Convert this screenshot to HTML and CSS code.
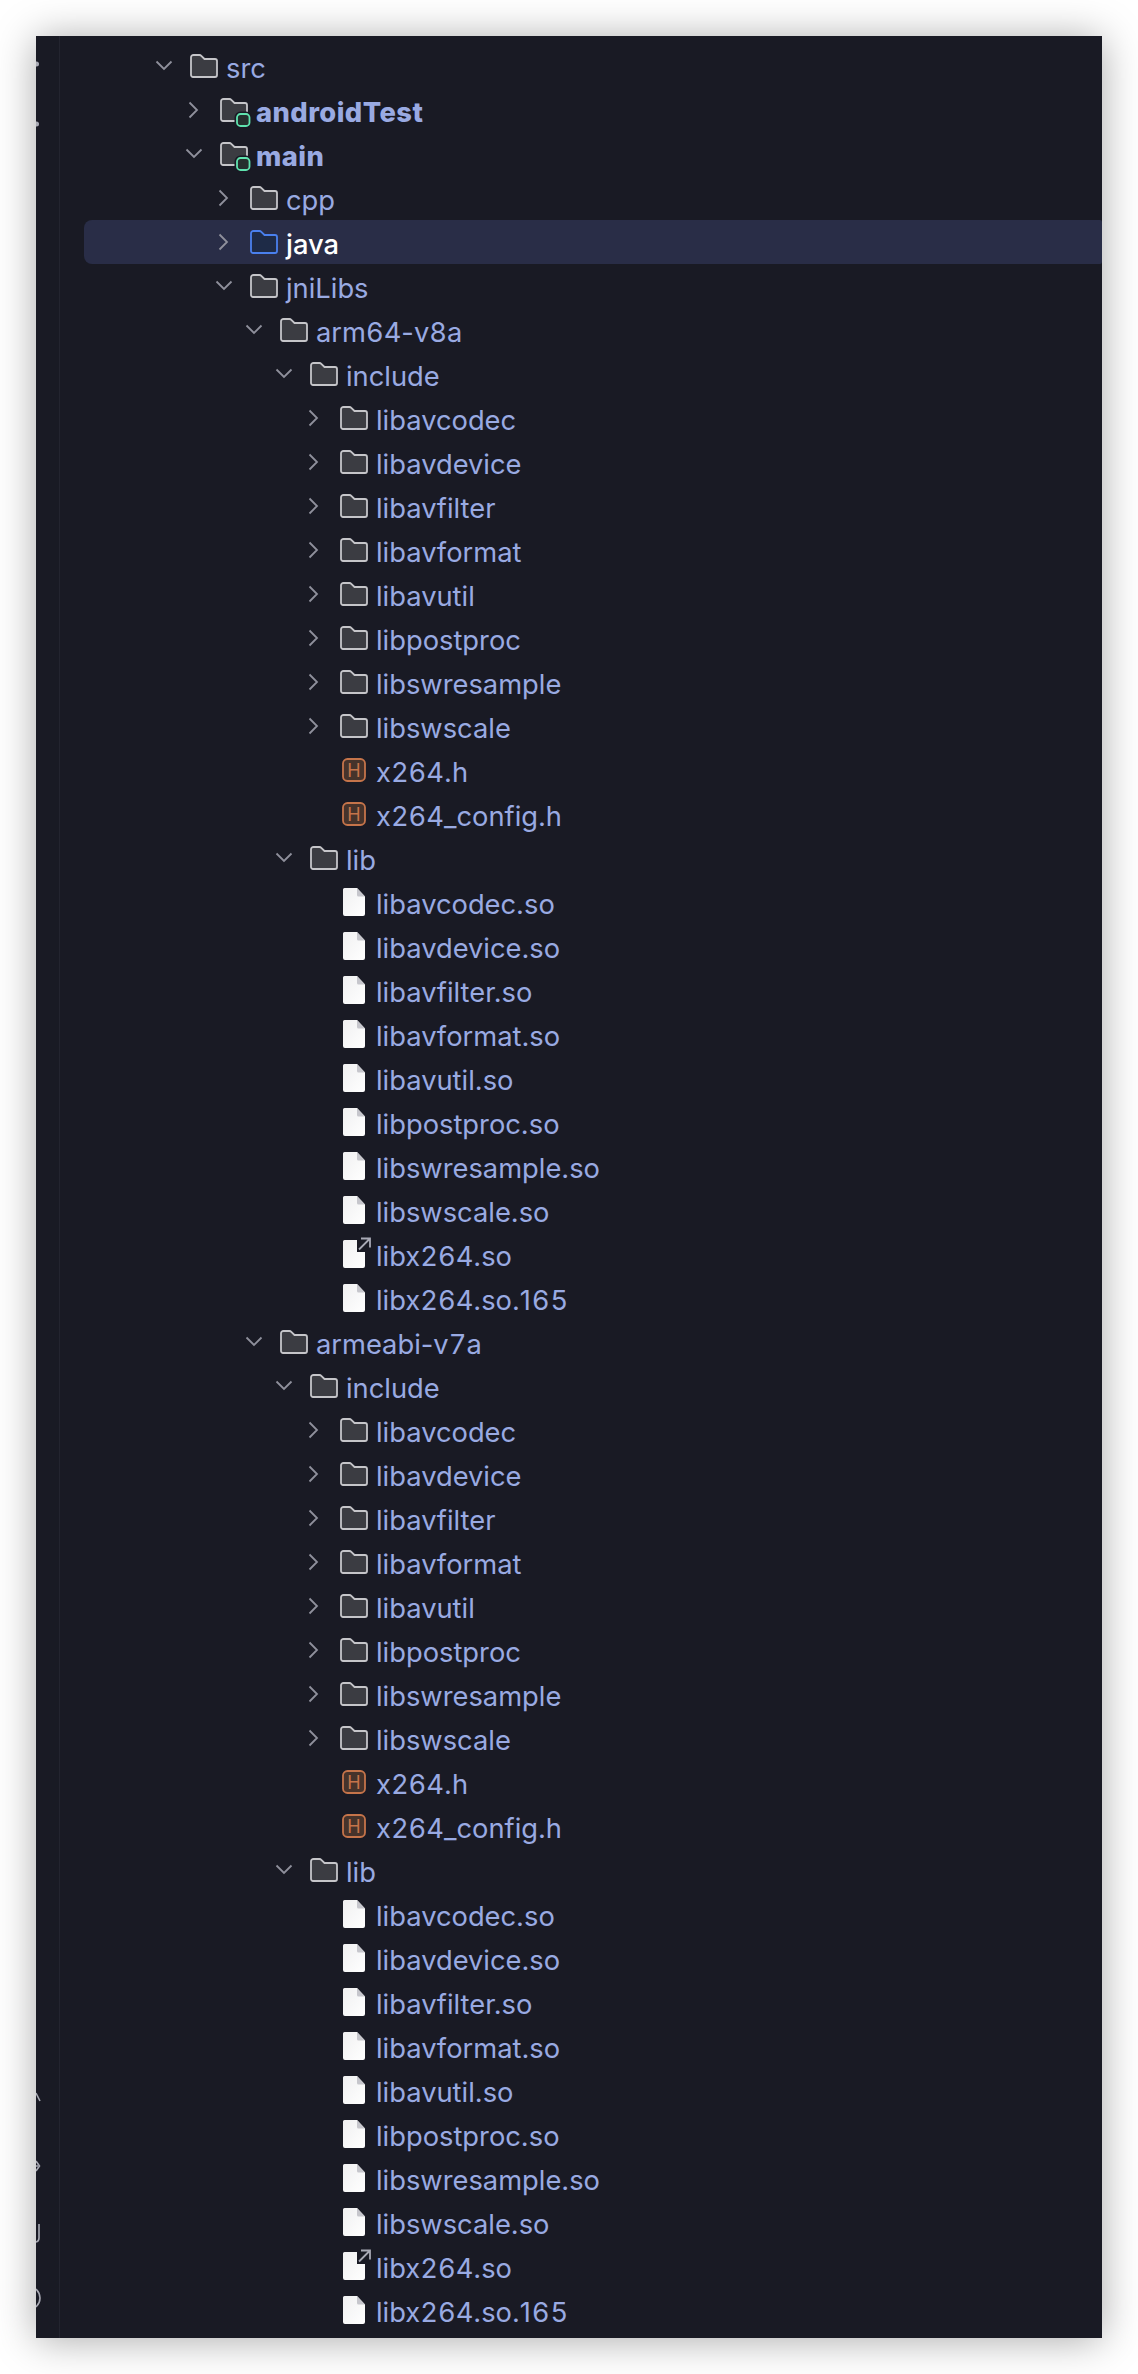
FILE: index.html
```html
<!DOCTYPE html>
<html lang="en">
<head>
<meta charset="utf-8">
<title>Project tree</title>
<link rel="stylesheet" href="styles.css">
</head>
<body>
<svg class="defs" width="0" height="0" aria-hidden="true">
  <symbol id="down" viewBox="0 0 16 16"><path d="M0.5 3.5L8 11L15.5 3.5"/></symbol>
  <symbol id="right" viewBox="0 0 16 16"><path d="M3.5 0.5L11 8L3.5 15.5"/></symbol>
  <symbol id="folder" viewBox="0 0 28 24"><path d="M3.5 1H9.5Q10.5 1 11.3 1.8L14.5 5H25a2 2 0 0 1 2 2V21a2 2 0 0 1-2 2H3a2 2 0 0 1-2-2V3.5A2.5 2.5 0 0 1 3.5 1Z"/></symbol>
  <symbol id="module" viewBox="0 0 28 24">
    <path class="m-folder" d="M3.5 1H9.5Q10.5 1 11.3 1.8L14.5 5H25a2 2 0 0 1 2 2V21a2 2 0 0 1-2 2H3a2 2 0 0 1-2-2V3.5A2.5 2.5 0 0 1 3.5 1Z"/>
    <rect class="m-halo" x="17" y="16" width="12.5" height="12" rx="3.5"/>
    <rect class="m-badge" x="17" y="16" width="12.5" height="12" rx="3.5"/>
  </symbol>
  <symbol id="file" viewBox="0 0 22 28">
    <path class="f-body" d="M1.5 0H14L22 8.5V26a2 2 0 0 1-2 2H2a2 2 0 0 1-2-2V1.500A1.500 1.500 0 0 1 1.500 0Z"/>
    <path class="f-fold" d="M14 0L22 8.500H15.500A1.500 1.500 0 0 1 14 7Z"/>
  </symbol>
  <symbol id="link" viewBox="0 0 22 28">
    <path class="f-body" d="M1.500 0H14V12H22V26a2 2 0 0 1-2 2H2a2 2 0 0 1-2-2V1.500A1.500 1.500 0 0 1 1.500 0Z"/>
    <path class="f-arrow" d="M16 9.500L27 -1.500M18 -1.500H27V7.500"/>
  </symbol>
  <symbol id="header" viewBox="0 0 24 24">
    <rect class="h-box" x="1" y="1" width="22" height="22" rx="4.500"/>
    <text class="h-letter" x="12" y="18.500">H</text>
  </symbol>
  <linearGradient id="paper" x1="0" y1="0" x2="1" y2="1"><stop offset="0" stop-color="#f0f0f1"/><stop offset="1" stop-color="#ffffff"/></linearGradient>
</svg>

<main class="window">
  <aside class="rail">
    <div class="rail-group">
      <svg class="frag frag-dot1" viewBox="0 0 4 6"><circle cx="0" cy="3" r="2.500"/></svg>
      <svg class="frag frag-dot2" viewBox="0 0 4 6"><circle cx="0" cy="3" r="2.500"/></svg>
    </div>
    <div class="rail-group rail-bottom">
      <svg class="frag frag-tri" viewBox="0 0 5 10"><path d="M0 1L4 9"/></svg>
      <svg class="frag frag-dia" viewBox="0 0 5 12"><path d="M0 1L3.500 6L0 11M0 6H2"/></svg>
      <svg class="frag frag-cup" viewBox="0 0 5 20"><path d="M3 1V15Q3 18.500 0 19"/></svg>
      <svg class="frag frag-arc" viewBox="0 0 5 20"><path d="M0 1Q4 5 4 10T0 19"/></svg>
    </div>
  </aside>
  <div class="tree">
    <div class="row d0"><svg class="chev"><use href="#down"/></svg><svg class="ico folder"><use href="#folder"/></svg><span>src</span></div>
    <div class="row d1 strong"><svg class="chev"><use href="#right"/></svg><svg class="ico module"><use href="#module"/></svg><span>androidTest</span></div>
    <div class="row d1 strong"><svg class="chev"><use href="#down"/></svg><svg class="ico module"><use href="#module"/></svg><span>main</span></div>
    <div class="row d2"><svg class="chev"><use href="#right"/></svg><svg class="ico folder"><use href="#folder"/></svg><span>cpp</span></div>
    <div class="row d2 selected"><svg class="chev"><use href="#right"/></svg><svg class="ico folder blue"><use href="#folder"/></svg><span>java</span></div>
    <div class="row d2"><svg class="chev"><use href="#down"/></svg><svg class="ico folder"><use href="#folder"/></svg><span>jniLibs</span></div>

    <div class="row d3"><svg class="chev"><use href="#down"/></svg><svg class="ico folder"><use href="#folder"/></svg><span>arm<b>64</b>-v<b>8</b>a</span></div>
    <div class="row d4"><svg class="chev"><use href="#down"/></svg><svg class="ico folder"><use href="#folder"/></svg><span>include</span></div>
    <div class="row d5"><svg class="chev"><use href="#right"/></svg><svg class="ico folder"><use href="#folder"/></svg><span>libavcodec</span></div>
    <div class="row d5"><svg class="chev"><use href="#right"/></svg><svg class="ico folder"><use href="#folder"/></svg><span>libavdevice</span></div>
    <div class="row d5"><svg class="chev"><use href="#right"/></svg><svg class="ico folder"><use href="#folder"/></svg><span>libavfilter</span></div>
    <div class="row d5"><svg class="chev"><use href="#right"/></svg><svg class="ico folder"><use href="#folder"/></svg><span>libavformat</span></div>
    <div class="row d5"><svg class="chev"><use href="#right"/></svg><svg class="ico folder"><use href="#folder"/></svg><span>libavutil</span></div>
    <div class="row d5"><svg class="chev"><use href="#right"/></svg><svg class="ico folder"><use href="#folder"/></svg><span>libpostproc</span></div>
    <div class="row d5"><svg class="chev"><use href="#right"/></svg><svg class="ico folder"><use href="#folder"/></svg><span>libswresample</span></div>
    <div class="row d5"><svg class="chev"><use href="#right"/></svg><svg class="ico folder"><use href="#folder"/></svg><span>libswscale</span></div>
    <div class="row d5 leaf"><svg class="ico header"><use href="#header"/></svg><span>x<b>264</b>.h</span></div>
    <div class="row d5 leaf"><svg class="ico header"><use href="#header"/></svg><span>x<b>264</b>_config.h</span></div>
    <div class="row d4"><svg class="chev"><use href="#down"/></svg><svg class="ico folder"><use href="#folder"/></svg><span>lib</span></div>
    <div class="row d5 leaf"><svg class="ico file"><use href="#file"/></svg><span>libavcodec.so</span></div>
    <div class="row d5 leaf"><svg class="ico file"><use href="#file"/></svg><span>libavdevice.so</span></div>
    <div class="row d5 leaf"><svg class="ico file"><use href="#file"/></svg><span>libavfilter.so</span></div>
    <div class="row d5 leaf"><svg class="ico file"><use href="#file"/></svg><span>libavformat.so</span></div>
    <div class="row d5 leaf"><svg class="ico file"><use href="#file"/></svg><span>libavutil.so</span></div>
    <div class="row d5 leaf"><svg class="ico file"><use href="#file"/></svg><span>libpostproc.so</span></div>
    <div class="row d5 leaf"><svg class="ico file"><use href="#file"/></svg><span>libswresample.so</span></div>
    <div class="row d5 leaf"><svg class="ico file"><use href="#file"/></svg><span>libswscale.so</span></div>
    <div class="row d5 leaf"><svg class="ico file"><use href="#link"/></svg><span>libx<b>264</b>.so</span></div>
    <div class="row d5 leaf"><svg class="ico file"><use href="#file"/></svg><span>libx<b>264</b>.so.<i>165</i></span></div>

    <div class="row d3"><svg class="chev"><use href="#down"/></svg><svg class="ico folder"><use href="#folder"/></svg><span>armeabi-v<b>7</b>a</span></div>
    <div class="row d4"><svg class="chev"><use href="#down"/></svg><svg class="ico folder"><use href="#folder"/></svg><span>include</span></div>
    <div class="row d5"><svg class="chev"><use href="#right"/></svg><svg class="ico folder"><use href="#folder"/></svg><span>libavcodec</span></div>
    <div class="row d5"><svg class="chev"><use href="#right"/></svg><svg class="ico folder"><use href="#folder"/></svg><span>libavdevice</span></div>
    <div class="row d5"><svg class="chev"><use href="#right"/></svg><svg class="ico folder"><use href="#folder"/></svg><span>libavfilter</span></div>
    <div class="row d5"><svg class="chev"><use href="#right"/></svg><svg class="ico folder"><use href="#folder"/></svg><span>libavformat</span></div>
    <div class="row d5"><svg class="chev"><use href="#right"/></svg><svg class="ico folder"><use href="#folder"/></svg><span>libavutil</span></div>
    <div class="row d5"><svg class="chev"><use href="#right"/></svg><svg class="ico folder"><use href="#folder"/></svg><span>libpostproc</span></div>
    <div class="row d5"><svg class="chev"><use href="#right"/></svg><svg class="ico folder"><use href="#folder"/></svg><span>libswresample</span></div>
    <div class="row d5"><svg class="chev"><use href="#right"/></svg><svg class="ico folder"><use href="#folder"/></svg><span>libswscale</span></div>
    <div class="row d5 leaf"><svg class="ico header"><use href="#header"/></svg><span>x<b>264</b>.h</span></div>
    <div class="row d5 leaf"><svg class="ico header"><use href="#header"/></svg><span>x<b>264</b>_config.h</span></div>
    <div class="row d4"><svg class="chev"><use href="#down"/></svg><svg class="ico folder"><use href="#folder"/></svg><span>lib</span></div>
    <div class="row d5 leaf"><svg class="ico file"><use href="#file"/></svg><span>libavcodec.so</span></div>
    <div class="row d5 leaf"><svg class="ico file"><use href="#file"/></svg><span>libavdevice.so</span></div>
    <div class="row d5 leaf"><svg class="ico file"><use href="#file"/></svg><span>libavfilter.so</span></div>
    <div class="row d5 leaf"><svg class="ico file"><use href="#file"/></svg><span>libavformat.so</span></div>
    <div class="row d5 leaf"><svg class="ico file"><use href="#file"/></svg><span>libavutil.so</span></div>
    <div class="row d5 leaf"><svg class="ico file"><use href="#file"/></svg><span>libpostproc.so</span></div>
    <div class="row d5 leaf"><svg class="ico file"><use href="#file"/></svg><span>libswresample.so</span></div>
    <div class="row d5 leaf"><svg class="ico file"><use href="#file"/></svg><span>libswscale.so</span></div>
    <div class="row d5 leaf"><svg class="ico file"><use href="#link"/></svg><span>libx<b>264</b>.so</span></div>
    <div class="row d5 leaf"><svg class="ico file"><use href="#file"/></svg><span>libx<b>264</b>.so.<i>165</i></span></div>
  </div>
</main>
</body>
</html>
```
FILE: styles.css
```css
* { box-sizing: border-box; }
html, body { margin: 0; background: #fff; }
body { height: 2374px; padding: 36px; overflow: hidden; font-family: Inter, "Liberation Sans", sans-serif; }
.defs { position: absolute; }
symbol, svg { overflow: visible; }

.window {
  display: flex;
  width: 1066px;
  height: 2302px;
  background: #191a24;
  box-shadow: 0 2px 38px rgba(0, 0, 0, .34);
  overflow: hidden;
}

.rail {
  display: flex;
  flex-direction: column;
  justify-content: space-between;
  flex: none;
  width: 24px;
  border-right: 1.500px solid #23242f;
}
.rail-group { display: flex; flex-direction: column; align-items: flex-start; padding-top: 25px; }
.rail-bottom { padding: 0 0 30px; }
.frag { display: block; width: 5px; fill: #a9aab4; stroke: none; }
.frag path { fill: none; stroke: #a9aab4; stroke-width: 1.600; }
.frag-dot1, .frag-dot2 { height: 6px; }
.frag-dot2 { margin-top: 54px; }
.frag-tri { height: 10px; }
.frag-dia { height: 12px; margin-top: 58px; }
.frag-cup { height: 20px; margin-top: 51px; }
.frag-arc { height: 20px; margin-top: 45px; }

.tree { flex: 1; min-width: 0; padding: 8px 0 0 24px; }
.row {
  display: flex;
  align-items: center;
  height: 44px;
  color: #99aae2;
  font-size: 27.300px;
  line-height: 44px;
  white-space: nowrap;
}
.row > span { position: relative; top: 3px; }
.row b { font-weight: inherit; font-variant-numeric: tabular-nums; }
.row i { font-style: normal; letter-spacing: 1.400px; }
.d0 { padding-left: 66px; }
.d1 { padding-left: 96px; }
.d2 { padding-left: 126px; }
.d3 { padding-left: 156px; }
.d4 { padding-left: 186px; }
.d5 { padding-left: 216px; }
.strong { font-weight: 800; letter-spacing: .45px; }
.selected { background: #292d47; border-radius: 8px 2px 2px 8px; color: #fff; font-weight: 500; }

.chev { flex: none; width: 16px; height: 16px; margin: 0 18px 0 6px; fill: none; stroke: #8f909c; stroke-width: 1.800; }
.ico { flex: none; display: block; }
.folder, .module { width: 28px; height: 24px; margin-right: 8px; }
.folder { fill: #3b3c42; stroke: #c5c5c9; stroke-width: 1.800; }
.folder.blue { fill: #1e2b47; stroke: #4a80ee; }
.m-folder { fill: #3b3c42; stroke: #c5c5c9; stroke-width: 1.800; }
.m-halo { fill: #191a24; stroke: #191a24; stroke-width: 5; }
.m-badge { fill: #25302e; stroke: #5fe3ae; stroke-width: 1.800; }

.leaf .file { width: 22px; height: 28px; margin: 0 11px 0 43px; }
.leaf .header { width: 24px; height: 24px; margin: 0 10px 0 42px; }
.f-body { fill: url(#paper); }
.f-fold { fill: #c6c6cc; }
.f-arrow { fill: none; stroke: #a8a9b5; stroke-width: 1.800; }
.h-box { fill: #46332b; stroke: #c5744a; stroke-width: 1.800; }
.h-letter { fill: #c5744a; font-family: Inter, "Liberation Sans", sans-serif; font-size: 18px; text-anchor: middle; }
```
